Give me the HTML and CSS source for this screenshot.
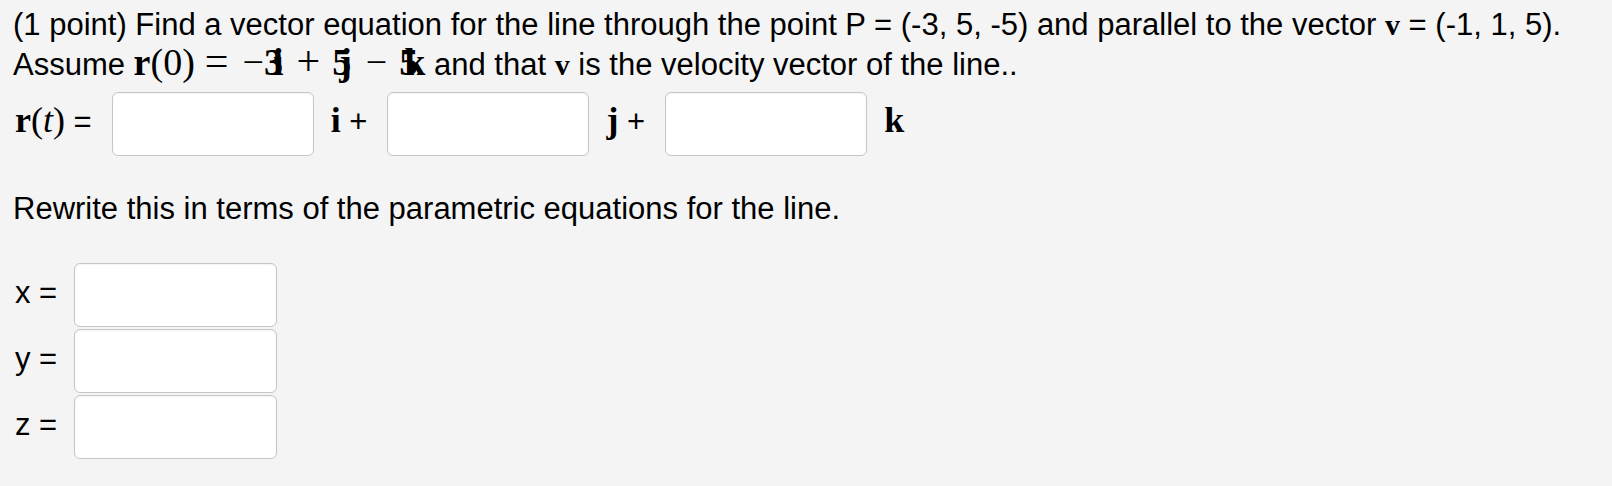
FILE: index.html
```html
<!DOCTYPE html>
<html lang="en">
<head>
<meta charset="utf-8">
<title>Vector equation of a line</title>
<link rel="stylesheet" href="styles.css">
</head>
<body>
<div class="problem">
  <p class="text">(1 point) Find a vector equation for the line through the point P = (-3, 5, -5) and parallel to the vector <b class="vec">v</b> = (-1, 1, 5).<br>Assume <span class="math"><b>r</b>(0)<span class="rel">=</span>−<b class="pair pi">3i</b><span class="bin">+</span><b class="pair pj">5j</b><span class="minus">−</span><b class="pair pk">5k</b></span> and that <b class="vec">v</b> is the velocity vector of the line..</p>

  <div class="vec-row">
    <span class="lbl"><span class="serif"><b>r</b>(<i>t</i>)</span> =</span>
    <input class="ans" type="text" aria-label="i component">
    <span class="lbl"><b class="serif">i</b> +</span>
    <input class="ans" type="text" aria-label="j component">
    <span class="lbl"><b class="serif">j</b> +</span>
    <input class="ans" type="text" aria-label="k component">
    <span class="lbl"><b class="serif">k</b></span>
  </div>

  <p class="text rewrite">Rewrite this in terms of the parametric equations for the line.</p>

  <div class="param">
    <div class="prow"><span class="lbl">x =</span><input class="ans pin" type="text" aria-label="x"></div>
    <div class="prow"><span class="lbl">y =</span><input class="ans pin" type="text" aria-label="y"></div>
    <div class="prow"><span class="lbl">z =</span><input class="ans pin" type="text" aria-label="z"></div>
  </div>
</div>
</body>
</html>
```

FILE: styles.css
```css
html, body {
  margin: 0;
  padding: 0;
}

body {
  background: #f4f4f4;
  color: #000;
  font-family: "Liberation Sans", Arial, Helvetica, sans-serif;
  font-size: 31px;
}

.problem {
  padding: 5px 12px 0 13px;
}

.text {
  margin: 0;
  line-height: 40px;
}

.vec {
  font-family: "Liberation Serif", "Times New Roman", serif;
  font-weight: 700;
  font-size: 30px;
  line-height: 0;
}

.math {
  font-family: "Liberation Serif", "Times New Roman", serif;
  font-size: 38px;
  line-height: 0;
}

.math b {
  font-weight: 700;
}

.rel,
.bin {
  font-size: 42px;
  line-height: 0;
}

.rel {
  margin: 0 14px 0 10px;
}

.bin {
  margin: 0 12px 0 13px;
}

.minus {
  margin: 0 12px 0 14px;
}

.pair.pi {
  letter-spacing: -10px;
  margin-right: 10px;
}

.pair.pj {
  letter-spacing: -12px;
  margin-right: 12px;
}

.pair.pk {
  letter-spacing: -14px;
  margin-right: 14px;
}

.vec-row {
  display: flex;
  align-items: center;
  margin-top: 7px;
  padding-left: 2px;
}

.lbl {
  line-height: 40px;
  padding-bottom: 4px;
  white-space: pre;
}

.serif {
  font-family: "Liberation Serif", "Times New Roman", serif;
  font-size: 36px;
  line-height: 1;
}

b.serif,
.serif b {
  font-weight: 700;
}

.ans {
  -webkit-appearance: none;
  appearance: none;
  box-sizing: border-box;
  width: 202px;
  height: 64px;
  margin: 0 17px 0 20px;
  padding: 0 8px;
  background: #fff;
  border: 1px solid #c6c6c6;
  border-radius: 6px;
  box-shadow: inset 0 1px 2px rgba(0, 0, 0, 0.05);
  font: inherit;
  outline: none;
}

.rewrite {
  margin-top: 33px;
}

.param {
  display: flex;
  flex-direction: column;
  gap: 2px;
  margin-top: 34px;
  padding-left: 2px;
}

.prow {
  display: flex;
  align-items: center;
}

.ans.pin {
  width: 203px;
  margin: 0 0 0 17px;
}
```
